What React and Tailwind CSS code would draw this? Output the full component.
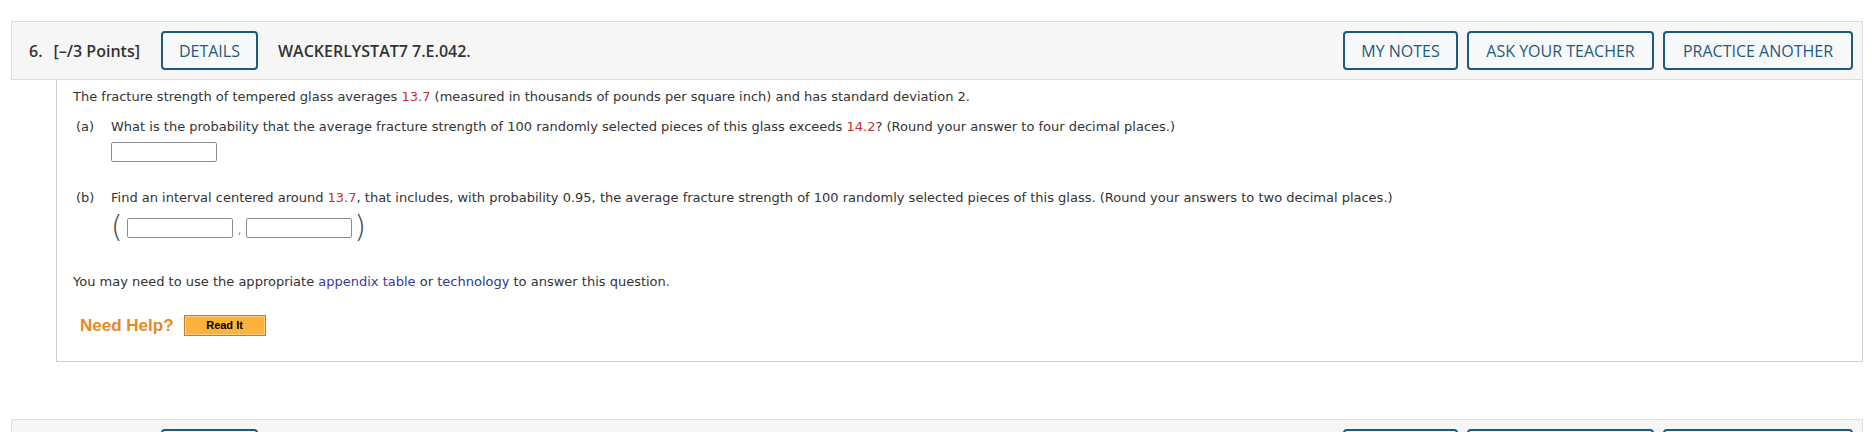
import React from 'react';

const headerBtn =
  "h-[39px] border-2 border-[#1e5a7c] rounded-[4px] bg-[#f7f8f9] text-[#1e5a7c] text-[16px] font-medium leading-none flex items-center justify-center whitespace-nowrap";

function QuestionHeader() {
  return (
    <div className="h-[59px] border border-[#dedede] bg-[#f6f6f6] flex items-center pl-[17px] pr-[9px] font-['Open_Sans',sans-serif]">
      <span className="text-[16px] font-semibold text-[#333]">6.</span>
      <span className="ml-[11px] text-[16px] font-semibold text-[#333]">[–/3 Points]</span>
      <button className={headerBtn + " ml-[21px] w-[97px]"}>DETAILS</button>
      <span className="ml-[20px] text-[16px] font-semibold text-[#333]">WACKERLYSTAT7 7.E.042.</span>
      <div className="ml-auto flex gap-[9px]">
        <button className={headerBtn + " w-[115px]"}>MY NOTES</button>
        <button className={headerBtn + " w-[187px]"}>ASK YOUR TEACHER</button>
        <button className={headerBtn + " w-[190px]"}>PRACTICE ANOTHER</button>
      </div>
    </div>
  );
}

// the next question's header, of which only the top edge shows
function NextHeaderEdge() {
  return (
    <div className="h-[59px] border border-[#dedede] bg-[#f6f6f6] flex items-center pl-[17px] pr-[9px]">
      <div className="ml-[132px] w-[97px] h-[39px] border-2 border-[#1e5a7c] rounded-[4px]" />
      <div className="ml-auto flex gap-[9px]">
        <div className="w-[115px] h-[39px] border-2 border-[#1e5a7c] rounded-[4px]" />
        <div className="w-[187px] h-[39px] border-2 border-[#1e5a7c] rounded-[4px]" />
        <div className="w-[190px] h-[39px] border-2 border-[#1e5a7c] rounded-[4px]" />
      </div>
    </div>
  );
}

function Box({ className = "" }) {
  return <div className={"h-[20px] border border-[#8c8c8c] rounded-[2px] bg-white " + className} />;
}

export default function App() {
  return (
    <div className="w-[1872px] h-[432px] overflow-hidden bg-white pt-[21px] pl-[11px] pr-[9px]">
      <QuestionHeader />

      <div className="ml-[45px] border-l border-r border-b border-[#cfcfcf] pl-[16px] pt-[7px] pb-[25px] text-[13px] text-[#333] font-['DejaVu_Sans',Verdana,sans-serif]">
        <p className="leading-[20px]">
          The fracture strength of tempered glass averages <span className="text-[#c8312d]">13.7</span> (measured in
          thousands of pounds per square inch) and has standard deviation 2.
        </p>

        <div className="mt-[10px] pl-[3px] flex">
          <span className="w-[35px] leading-[20px]">(a)</span>
          <div>
            <p className="leading-[20px]">
              What is the probability that the average fracture strength of 100 randomly selected pieces of this glass
              exceeds <span className="text-[#c8312d]">14.2</span>? (Round your answer to four decimal places.)
            </p>
            <Box className="mt-[5px] w-[106px]" />
          </div>
        </div>

        <div className="mt-[26px] pl-[3px] flex">
          <span className="w-[35px] leading-[20px]">(b)</span>
          <div>
            <p className="leading-[20px]">
              Find an interval centered around <span className="text-[#c8312d]">13.7</span>, that includes, with
              probability 0.95, the average fracture strength of 100 randomly selected pieces of this glass. (Round your
              answers to two decimal places.)
            </p>
            <div className="mt-[5px] h-[30px] flex items-center">
              <span className="text-[30px] leading-none font-light text-[#444] -mt-[3px] mr-[4px]">(</span>
              <Box className="w-[106px]" />
              <span className="mx-[5px] text-[11px] text-[#777] mt-[6px]">,</span>
              <Box className="w-[106px]" />
              <span className="text-[30px] leading-none font-light text-[#444] -mt-[3px] ml-[2px]">)</span>
            </div>
          </div>
        </div>

        <p className="mt-[29px] leading-[20px]">
          You may need to use the appropriate <span className="text-[#3a3a9c]">appendix table</span> or{" "}
          <span className="text-[#2b3a8c]">technology</span> to answer this question.
        </p>

        <div className="mt-[23px] pl-[7px] flex items-center h-[21px] font-['Liberation_Sans',Arial,sans-serif]">
          <span className="text-[17px] font-bold text-[#e38a22]">Need Help?</span>
          <button className="ml-[10px] w-[82px] h-[21px] border border-[#c8792a] bg-[#fdb23e] shadow-[inset_0_0_0_1px_#ffcf7a] text-[11px] font-bold text-black leading-none">
            Read It
          </button>
        </div>
      </div>

      <div className="mt-[57px]">
        <NextHeaderEdge />
      </div>
    </div>
  );
}
